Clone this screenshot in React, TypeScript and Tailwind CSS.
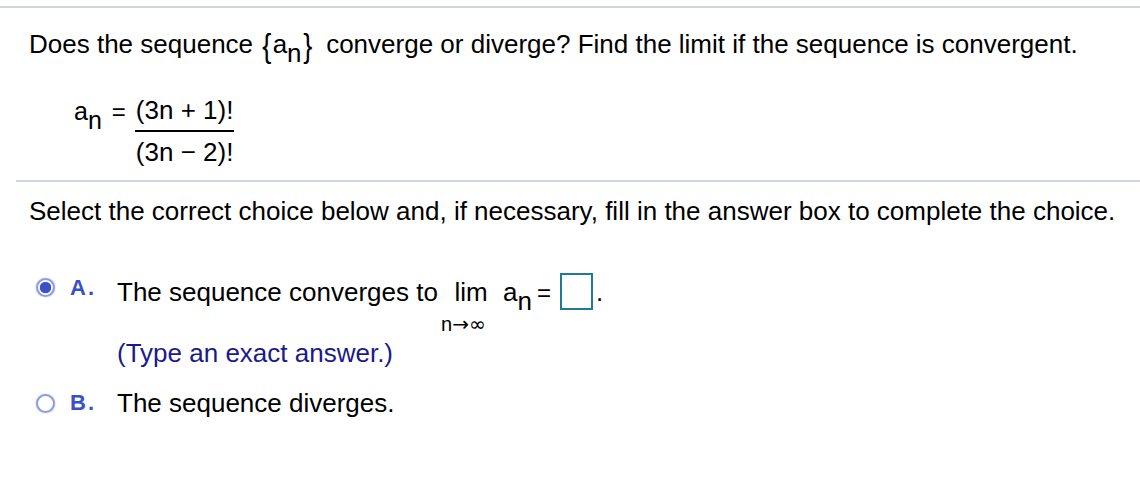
const font = "font-['Liberation_Sans',Arial,sans-serif]";

function Radio({ checked }: { checked?: boolean }) {
  return (
    <div className="w-[19px] h-[19px] rounded-full border-2 border-[#8d9be0] flex items-center justify-center shrink-0 shadow-[0_0_1.5px_#8d9be0]">
      {checked && <div className="w-[11px] h-[11px] rounded-full bg-[#3b4fc9] shadow-[0_0_1px_#3b4fc9]" />}
    </div>
  );
}

function Sub({ base, sub }: { base: string; sub: string }) {
  return (
    <span className="inline-flex items-baseline">
      {base}
      <span className="relative top-[9px]">{sub}</span>
    </span>
  );
}

function Brace({ ch }: { ch: string }) {
  return (
    <span className="text-[34px] leading-[30px] font-light inline-block scale-x-[0.8] relative top-[4px]">
      {ch}
    </span>
  );
}

export default function App() {
  return (
    <div className={`w-[1140px] h-[490px] bg-white text-black text-[26px] leading-[30px] ${font}`}>
      <div className="h-[6px]" />
      <div className="h-[2px] bg-[#cfd3e0]" />

      {/* Question */}
      <div className="pl-[29px] mt-[18px] flex items-baseline whitespace-pre">
        <span>Does the sequence </span>
        <span className="ml-[1px] mr-[6px] inline-flex items-baseline">
          <Brace ch="{" />
          <Sub base="a" sub="n" />
          <Brace ch="}" />
        </span>
        <span> converge or diverge? Find the limit if the sequence is convergent.</span>
      </div>

      {/* Formula */}
      <div className="pl-[74px] mt-[36px] flex items-start">
        <div className="flex items-baseline mt-[1px]">
          <span className="text-[25px]">
            <Sub base="a" sub="n" />
          </span>
          <span className="ml-[10px] text-[24px]">=</span>
        </div>
        <div className="ml-[9px] flex flex-col items-center">
          <span className="px-[1px]">(3n + 1)!</span>
          <div className="mt-[5px] h-[2px] w-full bg-black" />
          <span className="px-[1px] mt-[7px] leading-[26px]">(3n − 2)!</span>
        </div>
      </div>

      <div className="mt-[15px] ml-[16px] h-[2px] bg-[#cfd3e0]" />

      {/* Instruction */}
      <div className="pl-[29px] mt-[14px]">
        Select the correct choice below and, if necessary, fill in the answer box to complete the choice.
      </div>

      {/* Choice A */}
      <div className="mt-[51px] flex items-start">
        <div className="ml-[36px] mt-[1px]">
          <Radio checked />
        </div>
        <span className="ml-[15px] w-[47px] font-bold text-[#3b4fc9] text-[22px] leading-[22px] tracking-[2px]">A.</span>
        <div className="flex flex-col">
          <div className="flex items-baseline whitespace-pre">
            <span>The sequence converges to </span>
            <div className="relative w-[52px] flex justify-center">
              <span>lim</span>
              <span className="absolute left-[-4px] top-[37px] text-[20px] leading-[20px] whitespace-nowrap">
                n<span className="font-['DejaVu_Sans',sans-serif] text-[20px]">→∞</span>
              </span>
            </div>
            <span className="ml-[6px]">
              <Sub base="a" sub="n" />
            </span>
            <span className="ml-[5px] text-[24px]">=</span>
            <div className="ml-[9px] w-[33px] h-[37px] border-2 border-[#1b7b98] self-start mt-[-4px]" />
            <span className="ml-[3px]">.</span>
          </div>
          <div className="text-[#1a1a8c] mt-[28px]">(Type an exact answer.)</div>
        </div>
      </div>

      {/* Choice B */}
      <div className="mt-[20px] flex items-start">
        <div className="ml-[36px] mt-[6px]">
          <Radio />
        </div>
        <span className="ml-[15px] w-[47px] font-bold text-[#3b4fc9] text-[22px] leading-[30px] tracking-[2px]">B.</span>
        <span>The sequence diverges.</span>
      </div>
    </div>
  );
}
